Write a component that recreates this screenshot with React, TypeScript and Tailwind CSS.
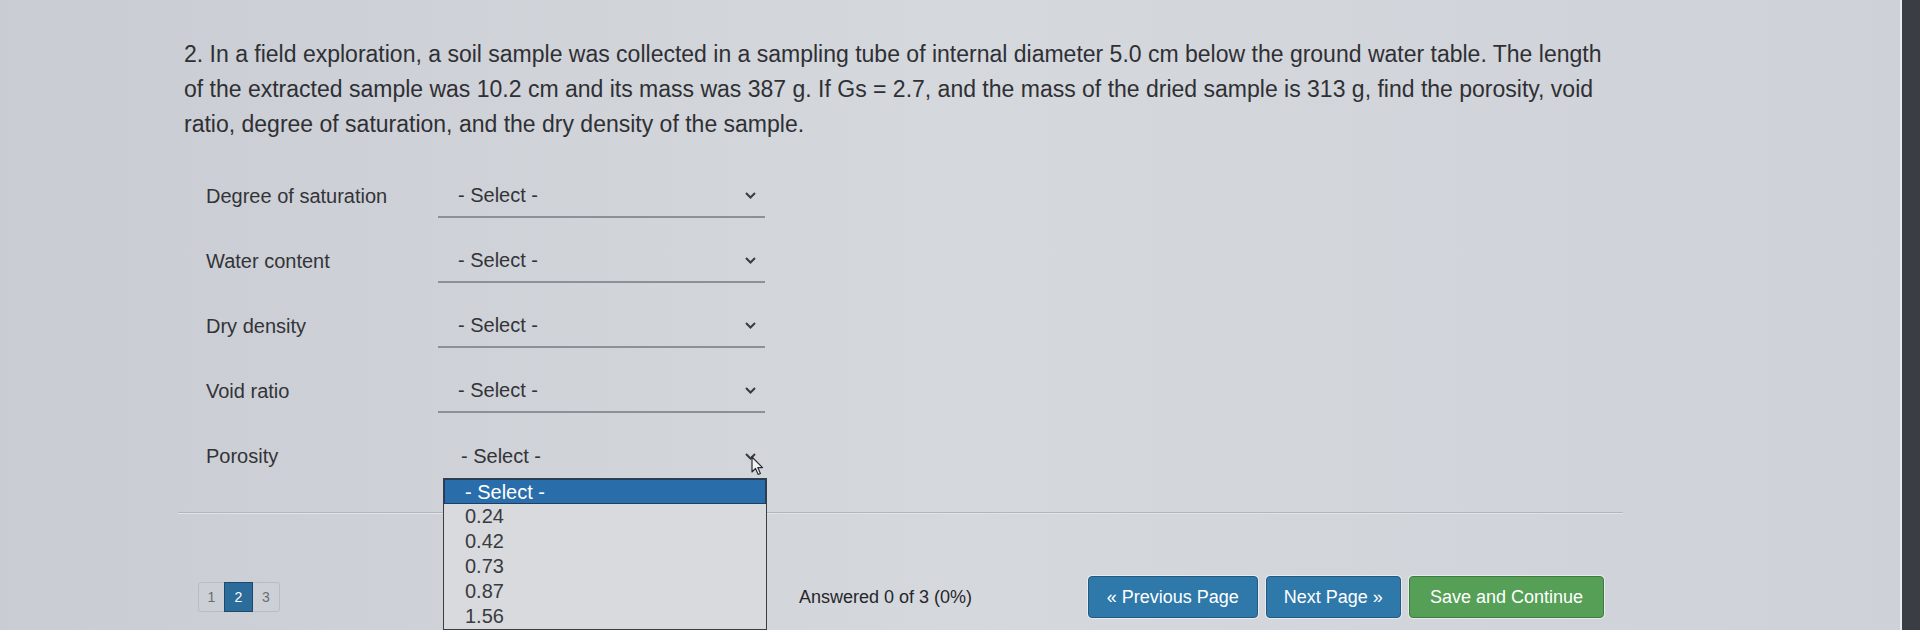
import React from "react";

function Chevron() {
  return (
    <svg width="11" height="7" viewBox="0 0 11 7" className="shrink-0">
      <path d="M1 1 L5.5 5.5 L10 1" fill="none" stroke="#3a3b3f" strokeWidth="2" />
    </svg>
  );
}

function Cursor() {
  return (
    <svg width="13" height="20" viewBox="0 0 13 20" className="absolute left-[313px] top-[22px]">
      <path
        d="M1 1 L1 16 L4.5 12.5 L7.2 18.5 L9.4 17.5 L6.8 11.6 L11.5 11.6 Z"
        fill="#f2f3f5"
        stroke="#2a2b2e"
        strokeWidth="1.2"
        strokeLinejoin="round"
      />
    </svg>
  );
}

const labels = ["Degree of saturation", "Water content", "Dry density", "Void ratio"];
const options = ["0.24", "0.42", "0.73", "0.87", "1.56"];

export default function App() {
  return (
    <div className="w-[1920px] h-[630px] flex overflow-hidden bg-linear-to-r from-[#c9ccd2] via-[#d5d8dd] to-[#ced1d7] font-['Liberation_Sans',Arial,sans-serif] text-[#333438]">
      <div className="flex-1 pl-[178px] pt-[37px]">
        <div className="w-[1445px]">
          <p className="pl-[6px] text-[23px] leading-[35px] text-[#2f3034] whitespace-nowrap">
            2. In a field exploration, a soil sample was collected in a sampling tube of internal diameter 5.0 cm below the ground water table. The length
            <br />
            of the extracted sample was 10.2 cm and its mass was 387 g. If Gs = 2.7, and the mass of the dried sample is 313 g, find the porosity, void
            <br />
            ratio, degree of saturation, and the dry density of the sample.
          </p>

          <div className="mt-[32px] flex flex-col gap-[21px] pl-[28px]">
            {labels.map((l) => (
              <div key={l} className="flex items-center h-[44px]">
                <div className="w-[232px] text-[20px]">{l}</div>
                <div className="w-[327px] h-[44px] border-b-2 border-[#8d9096] flex items-center justify-between pl-[20px] pr-[9px] text-[20px]">
                  <span>- Select -</span>
                  <Chevron />
                </div>
              </div>
            ))}
            <div className="flex items-center h-[44px]">
              <div className="w-[232px] text-[20px]">Porosity</div>
              <div className="relative w-[327px] h-[44px] flex items-center justify-between pl-[23px] pr-[9px] text-[20px]">
                <span>- Select -</span>
                <Chevron />
                <Cursor />
                <div className="absolute left-[5px] top-[44px] w-[324px] border border-[#3c3d40] bg-[#d8dade] text-[20px] z-10">
                  <div className="h-[25px] leading-[24px] pl-[20px] bg-[#2a6dab] text-white border border-[#1c3f66]">
                    - Select -
                  </div>
                  {options.map((o) => (
                    <div key={o} className="h-[25px] leading-[25px] pl-[21px] text-[#3a3b3f]">
                      {o}
                    </div>
                  ))}
                </div>
              </div>
            </div>
          </div>

          <div className="mt-[34px] border-t border-[#b3b6bc] h-[1px] shadow-[0_1px_0_#e2e4e8]" />

          <div className="mt-[63px] h-[42px] flex items-center pl-[20px] pr-[19px]">
            <div className="flex h-[30px] border border-[#b9bcc1] rounded-[3px] text-[14px]">
              <div className="w-[25px] flex items-center justify-center text-[#6a6c70]">1</div>
              <div className="w-[29px] flex items-center justify-center bg-[#2b6c9b] text-white border border-[#1d4a6c] -my-[1px]">2</div>
              <div className="w-[26px] flex items-center justify-center text-[#6a6c70]">3</div>
            </div>
            <div className="ml-[519px] text-[18px] text-[#26272a]">Answered 0 of 3 (0%)</div>
            <div className="ml-auto flex gap-[8px]">
              <button className="h-[42px] px-[18px] rounded-[4px] border border-[#225a80] bg-[#2e78aa] text-white text-[18px] shadow-[0_0_0_1px_#e8eaee]">
                « Previous Page
              </button>
              <button className="h-[42px] px-[17px] rounded-[4px] border border-[#225a80] bg-[#2e78aa] text-white text-[18px] shadow-[0_0_0_1px_#e8eaee]">
                Next Page »
              </button>
              <button className="h-[42px] px-[20px] rounded-[4px] border border-[#3d7b3e] bg-[#55a056] text-white text-[18px] shadow-[0_0_0_1px_#e8eaee]">
                Save and Continue
              </button>
            </div>
          </div>
        </div>
      </div>
      <div className="w-[20px] bg-[#3a3d43] border-l-2 border-[#e9ebef]" />
    </div>
  );
}
